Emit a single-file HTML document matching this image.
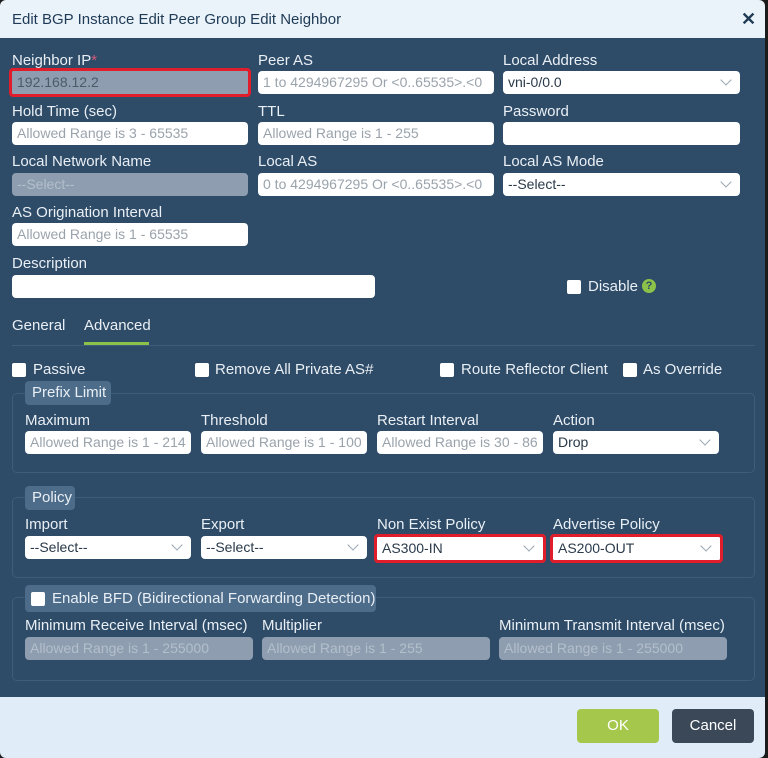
<!DOCTYPE html><html><head><style>
*{box-sizing:border-box;margin:0;padding:0}
body{width:768px;height:758px;background:#1b1b1b;font-family:"Liberation Sans",sans-serif;position:relative;overflow:hidden}
.dlg{position:absolute;left:0;top:0;width:765px;height:758px;background:#2e4b67;border-radius:6px 6px 6px 6px;overflow:hidden}
.hd{position:absolute;left:0;top:0;width:100%;height:38px;background:#eaf3fa}
.ft{position:absolute;left:0;top:697px;width:100%;height:61px;background:#e0edf8}
.t{position:absolute;color:#e9eff5;font-size:15px;white-space:nowrap;line-height:16px}
.i{position:absolute;height:23px;background:#fff;border-radius:4px;color:#9aa3ac;font-size:14px;line-height:23px;padding-left:5px;white-space:nowrap;overflow:hidden}
.i.v{color:#2a3a4a}
.i.d{background:#8e9db0;color:#b3bfcb}
.s::after{content:"";position:absolute;right:10px;top:5px;width:7px;height:7px;border-right:1.5px solid #9aa6b2;border-bottom:1.5px solid #9aa6b2;transform:rotate(45deg)}
.r{outline:3px solid #e01e2b;outline-offset:0;border-radius:1px}
.cb{position:absolute;width:14px;height:14px;background:#fff;border-radius:2px}
.box{position:absolute;border:1px solid #3f5c78;border-radius:5px}
.bd{position:absolute;background:#4c6c8a;border-radius:4px;color:#e9eff5;font-size:15px;line-height:24px;padding-left:7px;white-space:nowrap}
</style></head><body><div class="dlg">
<div class="hd"></div>
<div class="t" style="left:12px;top:12px;color:#1f3a55;font-size:15px">Edit BGP Instance Edit Peer Group Edit Neighbor</div>
<div class="t" style="left:741px;top:11px;color:#1f3a55;font-size:18px;font-weight:bold">✕</div>

<div class="t" style="left:12px;top:53px">Neighbor IP<span style="color:#d25a7a">*</span></div>
<div class="t" style="left:258px;top:53px">Peer AS</div>
<div class="t" style="left:503px;top:53px">Local Address</div>
<div class="i d r" style="left:12px;top:71px;width:236px;color:#4c5a68">192.168.12.2</div>
<div class="i" style="left:258px;top:71px;width:236px">1 to 4294967295 Or &lt;0..65535&gt;.&lt;0</div>
<div class="i v s" style="left:503px;top:71px;width:237px">vni-0/0.0</div>

<div class="t" style="left:12px;top:104px">Hold Time (sec)</div>
<div class="t" style="left:258px;top:104px">TTL</div>
<div class="t" style="left:503px;top:104px">Password</div>
<div class="i" style="left:12px;top:122px;width:236px">Allowed Range is 3 - 65535</div>
<div class="i" style="left:258px;top:122px;width:236px">Allowed Range is 1 - 255</div>
<div class="i" style="left:503px;top:122px;width:237px"></div>

<div class="t" style="left:12px;top:154px">Local Network Name</div>
<div class="t" style="left:258px;top:154px">Local AS</div>
<div class="t" style="left:503px;top:154px">Local AS Mode</div>
<div class="i d" style="left:12px;top:173px;width:236px">--Select--</div>
<div class="i" style="left:258px;top:173px;width:236px">0 to 4294967295 Or &lt;0..65535&gt;.&lt;0</div>
<div class="i v s" style="left:503px;top:173px;width:237px">--Select--</div>

<div class="t" style="left:12px;top:205px">AS Origination Interval</div>
<div class="i" style="left:12px;top:223px;width:236px">Allowed Range is 1 - 65535</div>

<div class="t" style="left:12px;top:256px">Description</div>
<div class="i" style="left:12px;top:275px;width:363px"></div>
<div class="cb" style="left:567px;top:280px"></div>
<div class="t" style="left:588px;top:279px">Disable</div>
<div style="position:absolute;left:642px;top:279px;width:14px;height:14px;border-radius:7px;background:#8bc34a;color:#2e4b67;font-size:11px;font-weight:bold;text-align:center;line-height:14px">?</div>

<div class="t" style="left:12px;top:318px">General</div>
<div class="t" style="left:84px;top:318px">Advanced</div>
<div style="position:absolute;left:12px;top:345px;width:743px;height:1px;background:#3f5c78"></div>
<div style="position:absolute;left:84px;top:342px;width:65px;height:3px;background:#8bc34a"></div>

<div class="cb" style="left:12px;top:363px"></div><div class="t" style="left:33px;top:362px">Passive</div>
<div class="cb" style="left:195px;top:363px"></div><div class="t" style="left:215px;top:362px">Remove All Private AS#</div>
<div class="cb" style="left:440px;top:363px"></div><div class="t" style="left:461px;top:362px">Route Reflector Client</div>
<div class="cb" style="left:623px;top:363px"></div><div class="t" style="left:643px;top:362px">As Override</div>

<div class="box" style="left:12px;top:393px;width:743px;height:80px"></div>
<div class="bd" style="left:25px;top:381px;width:86px">Prefix Limit</div>
<div class="t" style="left:25px;top:413px">Maximum</div>
<div class="t" style="left:201px;top:413px">Threshold</div>
<div class="t" style="left:377px;top:413px">Restart Interval</div>
<div class="t" style="left:553px;top:413px">Action</div>
<div class="i" style="left:25px;top:431px;width:166px">Allowed Range is 1 - 214</div>
<div class="i" style="left:201px;top:431px;width:166px">Allowed Range is 1 - 100</div>
<div class="i" style="left:377px;top:431px;width:166px">Allowed Range is 30 - 86</div>
<div class="i v s" style="left:553px;top:431px;width:166px">Drop</div>

<div class="box" style="left:12px;top:497px;width:743px;height:81px"></div>
<div class="bd" style="left:25px;top:486px;width:50px">Policy</div>
<div class="t" style="left:25px;top:517px">Import</div>
<div class="t" style="left:201px;top:517px">Export</div>
<div class="t" style="left:377px;top:517px">Non Exist Policy</div>
<div class="t" style="left:553px;top:517px">Advertise Policy</div>
<div class="i v s" style="left:25px;top:536px;width:166px">--Select--</div>
<div class="i v s" style="left:201px;top:536px;width:166px">--Select--</div>
<div class="i v s r" style="left:377px;top:537px;width:166px">AS300-IN</div>
<div class="i v s r" style="left:553px;top:537px;width:167px">AS200-OUT</div>

<div class="box" style="left:12px;top:597px;width:743px;height:84px"></div>
<div class="bd" style="left:25px;top:585px;width:351px;height:27px;line-height:27px;padding-left:27px">Enable BFD (Bidirectional Forwarding Detection)</div>
<div class="cb" style="left:31px;top:592px"></div>
<div class="t" style="left:25px;top:618px">Minimum Receive Interval (msec)</div>
<div class="t" style="left:262px;top:618px">Multiplier</div>
<div class="t" style="left:499px;top:618px">Minimum Transmit Interval (msec)</div>
<div class="i d" style="left:25px;top:637px;width:228px">Allowed Range is 1 - 255000</div>
<div class="i d" style="left:262px;top:637px;width:228px">Allowed Range is 1 - 255</div>
<div class="i d" style="left:499px;top:637px;width:228px">Allowed Range is 1 - 255000</div>

<div class="ft"></div>
<div style="position:absolute;left:577px;top:709px;width:82px;height:34px;background:#a5c84c;border-radius:4px;color:#fff;font-size:15px;text-align:center;line-height:34px">OK</div>
<div style="position:absolute;left:672px;top:709px;width:82px;height:34px;background:#3a4858;border-radius:4px;color:#fff;font-size:15px;text-align:center;line-height:34px">Cancel</div>
</div></body></html>
